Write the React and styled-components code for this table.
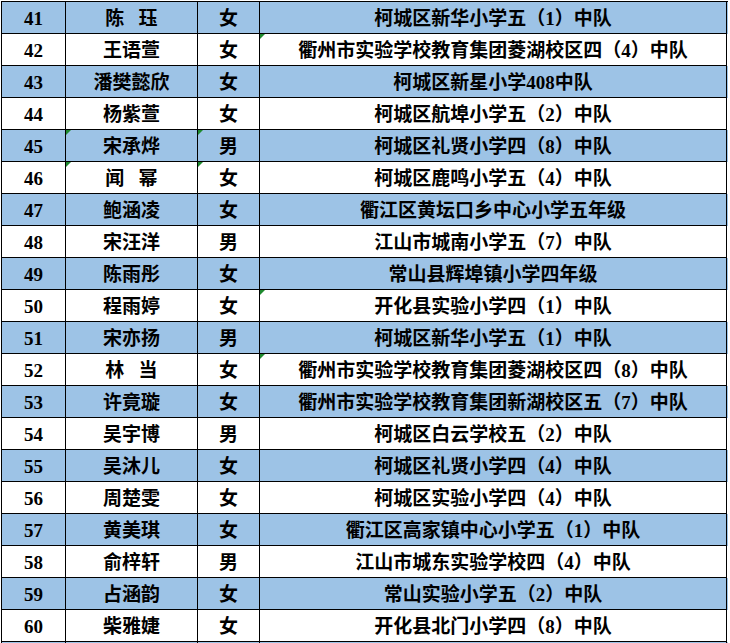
import React from "react";
import styled, { createGlobalStyle } from "styled-components";

const Global = createGlobalStyle`
  html, body { margin: 0; padding: 0; background: #ffffff; }
  body { font-family: "Liberation Serif", "Noto Sans CJK SC", serif; }
`;

const rows = [
  ["41", "陈 珏", "女", "柯城区新华小学五（1）中队"],
  ["42", "王语萱", "女", "衢州市实验学校教育集团菱湖校区四（4）中队"],
  ["43", "潘樊懿欣", "女", "柯城区新星小学408中队"],
  ["44", "杨紫萱", "女", "柯城区航埠小学五（2）中队"],
  ["45", "宋承烨", "男", "柯城区礼贤小学四（8）中队"],
  ["46", "闻 幂", "女", "柯城区鹿鸣小学五（4）中队"],
  ["47", "鲍涵凌", "女", "衢江区黄坛口乡中心小学五年级"],
  ["48", "宋汪洋", "男", "江山市城南小学五（7）中队"],
  ["49", "陈雨彤", "女", "常山县辉埠镇小学四年级"],
  ["50", "程雨婷", "女", "开化县实验小学四（1）中队"],
  ["51", "宋亦扬", "男", "柯城区新华小学五（1）中队"],
  ["52", "林 当", "女", "衢州市实验学校教育集团菱湖校区四（8）中队"],
  ["53", "许竟璇", "女", "衢州市实验学校教育集团新湖校区五（7）中队"],
  ["54", "吴宇博", "男", "柯城区白云学校五（2）中队"],
  ["55", "吴沐儿", "女", "柯城区礼贤小学四（4）中队"],
  ["56", "周楚雯", "女", "柯城区实验小学四（4）中队"],
  ["57", "黄美琪", "女", "衢江区高家镇中心小学五（1）中队"],
  ["58", "俞梓轩", "男", "江山市城东实验学校四（4）中队"],
  ["59", "占涵韵", "女", "常山实验小学五（2）中队"],
  ["60", "柴雅婕", "女", "开化县北门小学四（8）中队"],
];

// green Excel error markers: [rowIndex, colIndex]
const marks = new Set(["1-3", "4-1", "4-2", "5-1", "5-2", "9-3", "11-3"]);

const Sheet = styled.div`
  padding: 1px 0 0 1px;
  display: flex;
  flex-direction: column;
  width: 730px;
  height: 643px;
  overflow: hidden;
  box-sizing: border-box;
`;

const Table = styled.div`
  display: flex;
  flex-direction: column;
  width: 727px;
  border-top: 1px solid #000;
  border-left: 1px solid #000;
  box-sizing: border-box;
`;

const Row = styled.div`
  display: grid;
  grid-template-columns: 64px 132px 62px 467px;
  height: 32px;
  flex: none;
  background: ${(p) => (p.$blue ? "#9dc3e6" : "#ffffff")};
`;

const Cell = styled.div`
  position: relative;
  display: flex;
  align-items: center;
  justify-content: center;
  border-right: 1px solid #000;
  border-bottom: 1px solid #000;
  font-size: 19px;
  font-weight: bold;
  color: #000;
  white-space: pre;
  line-height: 1;
  padding-top: 1px;
  box-sizing: border-box;
`;

const Mark = styled.span`
  position: absolute;
  left: 0;
  top: 0;
  width: 0;
  height: 0;
  border-top: 5px solid #1e8a2e;
  border-right: 5px solid transparent;
`;

const fixName = (n) => n.replace(" ", "\u2002\u2005");

export default function App() {
  return (
    <>
      <Global />
      <Sheet>
        <Table>
          {rows.map((r, i) => (
            <Row key={r[0]} $blue={i % 2 === 0}>
              {r.map((v, j) => (
                <Cell key={j}>
                  {marks.has(`${i}-${j}`) && <Mark />}
                  {j === 1 ? fixName(v) : v}
                </Cell>
              ))}
            </Row>
          ))}
          <Row $blue>
            <Cell />
            <Cell />
            <Cell />
            <Cell />
          </Row>
        </Table>
      </Sheet>
    </>
  );
}
